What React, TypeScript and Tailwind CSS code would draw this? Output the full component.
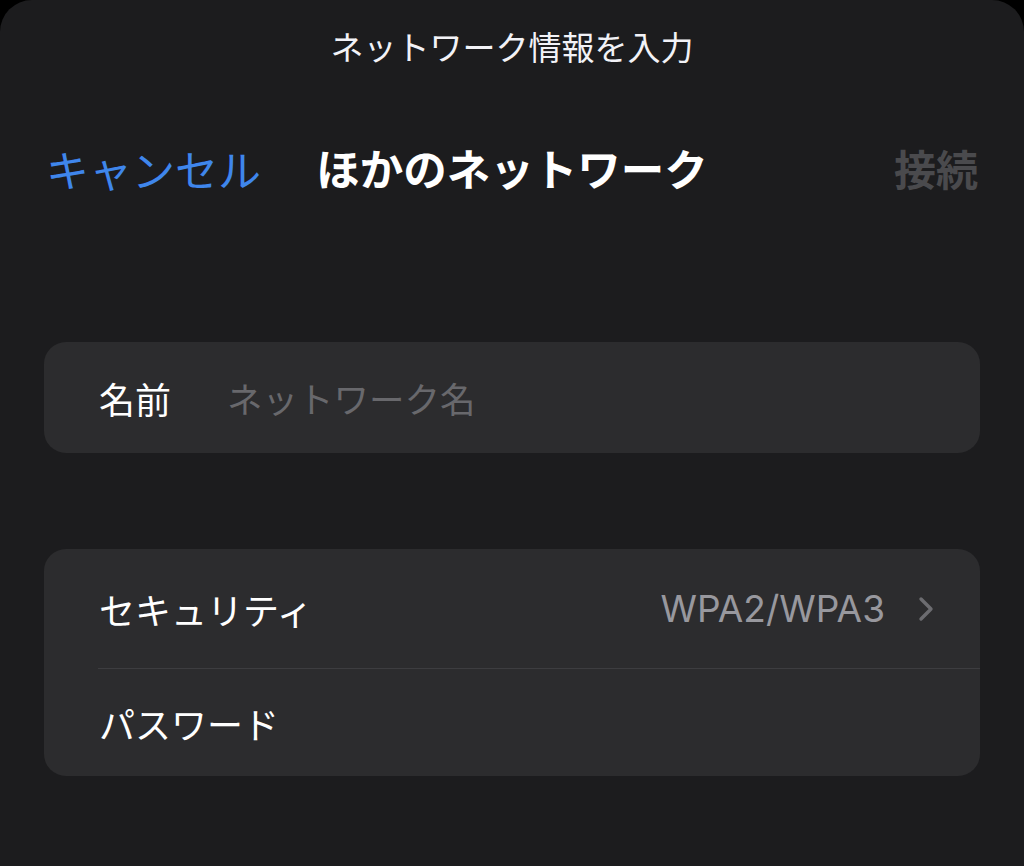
const jp = "font-['Noto_Sans_CJK_JP','Noto_Sans',sans-serif]";

function Chevron() {
  return (
    <svg width="18" height="26" viewBox="0 0 18 26" fill="none" className="shrink-0">
      <polyline
        points="4,3 14,13 4,23"
        stroke="#6c6c70"
        strokeWidth="3.4"
        strokeLinecap="round"
        strokeLinejoin="round"
      />
    </svg>
  );
}

export default function App() {
  return (
    <div className={`h-[866px] w-full bg-black ${jp}`}>
      <div className="flex h-full flex-col rounded-t-[32px] bg-[#1c1c1e]">
        {/* sheet header */}
        <div className="pt-[26px] text-center text-[33px] leading-[40px] text-[#f2f2f7]">
          ネットワーク情報を入力
        </div>

        {/* nav bar */}
        <div className="mt-[74px] grid h-[56px] grid-cols-[1fr_auto_1fr] items-center pl-[46px] pr-[46px]">
          <span className="text-[43px] leading-none text-[#3f86ec]">キャンセル</span>
          <span className="text-[43.5px] font-bold leading-none text-white">ほかのネットワーク</span>
          <span className="justify-self-end text-[42px] font-bold leading-none text-[#4a4a4d]">接続</span>
        </div>

        {/* name */}
        <div className="mx-[44px] mt-[146px] flex h-[111px] items-center rounded-[22px] bg-[#2c2c2e] pl-[55px]">
          <span className="w-[128px] text-[36px] text-white">名前</span>
          <span className="text-[35.5px] text-[#68686c]">ネットワーク名</span>
        </div>

        {/* security / password */}
        <div className="mx-[44px] mt-[96px] rounded-[22px] bg-[#2c2c2e]">
          <div className="flex h-[119px] items-center justify-between pl-[55px] pr-[45px]">
            <span className="text-[36px] text-white">セキュリティ</span>
            <div className="flex items-center gap-[32px]">
              <span className="font-['Inter',sans-serif] text-[37px] text-[#98989e]">WPA2/WPA3</span>
              <Chevron />
            </div>
          </div>
          <div className="ml-[54px] h-px bg-[#3d3d40]" />
          <div className="flex h-[107px] items-center pl-[55px]">
            <span className="text-[36px] text-white">パスワード</span>
          </div>
        </div>
      </div>
    </div>
  );
}
